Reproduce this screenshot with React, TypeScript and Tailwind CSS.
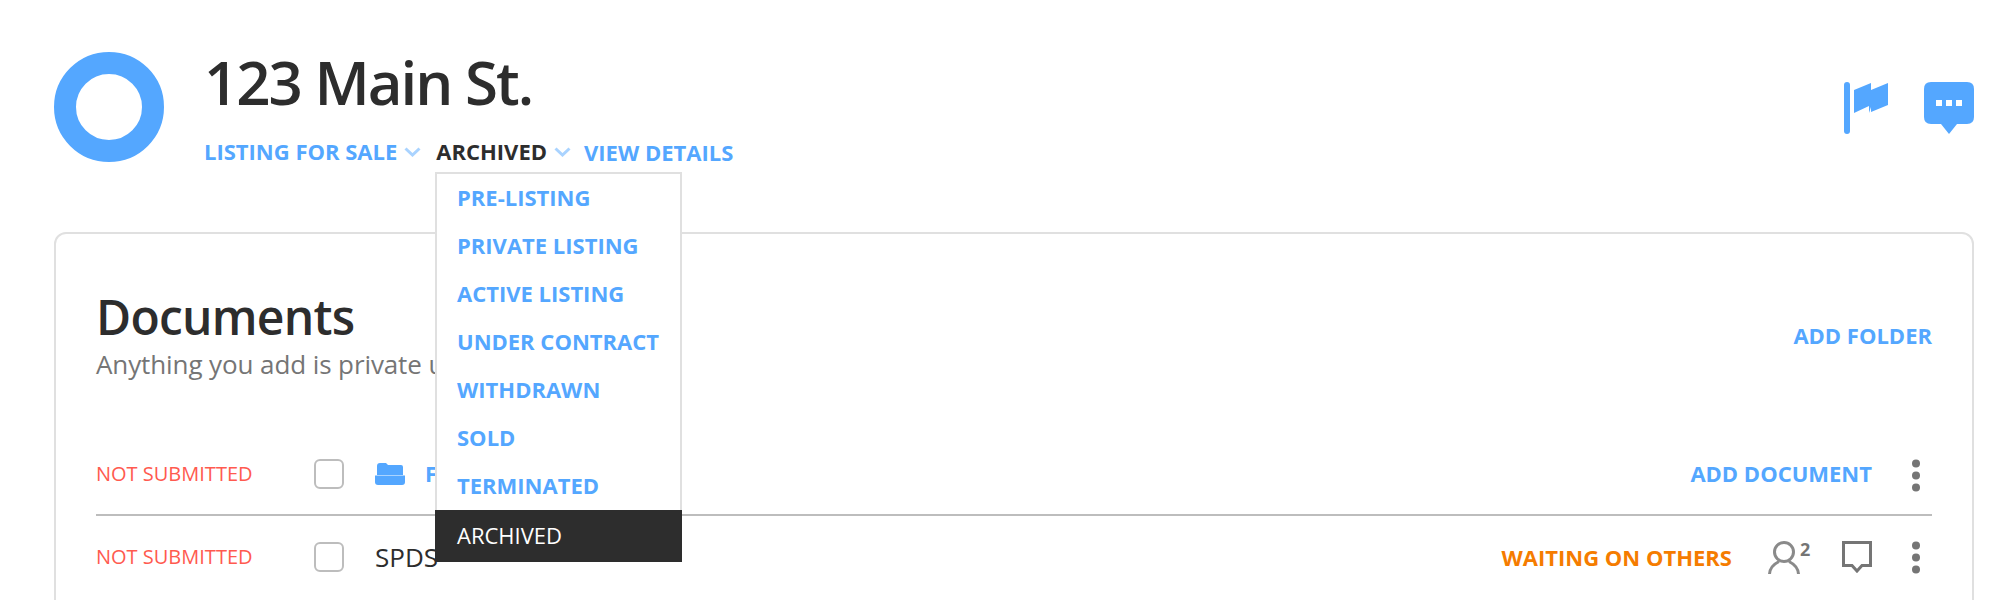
const STATUSES = ["PRE-LISTING", "PRIVATE LISTING", "ACTIVE LISTING", "UNDER CONTRACT", "WITHDRAWN", "SOLD", "TERMINATED"];

function Chevron() {
  return (
    <svg width="17" height="10" viewBox="0 0 17 10" className="ml-[7px] mt-[2px]">
      <path d="M1.5 1.5 L8.5 8 L15.5 1.5" fill="none" stroke="#a9d3ff" strokeWidth="3" />
    </svg>
  );
}

function Kebab() {
  return (
    <svg width="10" height="33" viewBox="0 0 10 33">
      <circle cx="5" cy="4.5" r="4" fill="#757575" />
      <circle cx="5" cy="16.5" r="4" fill="#757575" />
      <circle cx="5" cy="28.5" r="4" fill="#757575" />
    </svg>
  );
}

function Checkbox() {
  return <div className="h-[30px] w-[30px] rounded-[6px] border-2 border-[#bdbdbd] bg-white" />;
}

export default function App() {
  return (
    <div className="relative h-[600px] overflow-hidden bg-white pl-[54px] pr-[26px] pt-[52px] font-['Open_Sans',sans-serif] text-[#2d2d2d]">
      <header className="flex h-[180px] items-start">
        <div className="h-[110px] w-[110px] rounded-full border-[22px] border-[#54a7ff]" />
        <div className="ml-[40px]">
          <h1 className="-mt-[11px] text-[60px] font-semibold leading-[82px] tracking-[-2px]">123 Main St.</h1>
          <nav className="relative mt-[13px] flex items-center text-[22px] font-bold leading-[28px]">
            <span className="text-[#54a7ff]">LISTING FOR SALE</span>
            <Chevron />
            <span className="ml-[15px]">ARCHIVED</span>
            <Chevron />
            <span className="ml-[13px] mt-[2px] text-[#54a7ff]">VIEW DETAILS</span>
            <ul className="absolute left-[231px] top-[36px] z-10 w-[247px] border-2 border-[#e0e0e0] bg-white text-[#54a7ff]">
              {STATUSES.map((s) => (
                <li key={s} className="flex h-[48px] items-center px-[20px] pb-[2px] font-bold">{s}</li>
              ))}
              <li className="-mx-[2px] -mb-[2px] flex h-[52px] items-center bg-[#2d2d2d] px-[22px] pb-[2px] font-normal text-white">ARCHIVED</li>
            </ul>
          </nav>
        </div>
        <div className="ml-auto flex items-start gap-[36px] pt-[30px]">
          <svg width="44" height="52" viewBox="0 0 44 52">
            <rect x="0" y="0" width="6" height="52" rx="3" fill="#54a7ff" />
            <path d="M10 8 L27 1 V8 L44 1 V23 L27 30 V25 L25 31 V24 L10 31 Z" fill="#54a7ff" />
          </svg>
          <svg width="50" height="52" viewBox="0 0 50 52">
            <path d="M7 0 H43 Q50 0 50 7 V35 Q50 42 43 42 H33 L25 52 L17 42 H7 Q0 42 0 35 V7 Q0 0 7 0 Z" fill="#54a7ff" />
            <rect x="12" y="18" width="6" height="6" fill="#fff" />
            <rect x="22" y="18" width="6" height="6" fill="#fff" />
            <rect x="32" y="18" width="6" height="6" fill="#fff" />
          </svg>
        </div>
      </header>

      <section className="h-[500px] rounded-[12px] border-2 border-[#e0e0e0] px-[40px] pt-[52px]">
        <div className="flex items-start justify-between">
          <div>
            <h2 className="text-[48px] font-semibold leading-[62px] tracking-[-0.75px]">Documents</h2>
            <p className="text-[26px] leading-[32px] tracking-[-0.1px] text-[#757575]">Anything you add is private until you share it</p>
          </div>
          <button className="mt-[35px] text-[22px] font-bold leading-[28px] text-[#54a7ff]">ADD FOLDER</button>
        </div>

        <div className="mt-[53px] flex h-[83px] items-center border-b-2 border-[#bdbdbd]">
          <span className="w-[218px] text-[20px] text-[#ff5a4f]">NOT SUBMITTED</span>
          <Checkbox />
          <svg width="30" height="22" viewBox="0 0 30 22" className="ml-[31px]">
            <path d="M2 3 Q2 0 5 0 H11 L13 2 H26 Q28 2 28 4 V12 H2 Z" fill="#54a7ff" />
            <path d="M0 13 H30 V19 Q30 22 27 22 H3 Q0 22 0 19 Z" fill="#54a7ff" />
            <rect x="0" y="12" width="30" height="1" fill="#a9d3ff" />
          </svg>
          <span className="ml-[20px] text-[22px] font-bold text-[#54a7ff]">FOLDER</span>
          <button className="ml-auto pb-[2px] text-[22px] font-bold leading-[28px] text-[#54a7ff]">ADD DOCUMENT</button>
          <div className="ml-[39px] mr-[11px] mt-[4px] flex"><Kebab /></div>
        </div>

        <div className="flex h-[82px] items-center">
          <span className="w-[218px] text-[20px] text-[#ff5a4f]">NOT SUBMITTED</span>
          <Checkbox />
          <span className="ml-[31px] text-[26px]">SPDS</span>
          <span className="ml-auto text-[22px] font-bold text-[#f57c00]">WAITING ON OTHERS</span>
          <div className="relative ml-[36px] h-[33px] w-[44px]">
            <svg width="32" height="33" viewBox="0 0 32 33">
              <circle cx="16" cy="11" r="9.5" fill="none" stroke="#8a8a8a" strokeWidth="3" />
              <path d="M1.5 33 C2 25 8 22 11 20.5 M30.5 33 C30 25 24 22 21 20.5" fill="none" stroke="#8a8a8a" strokeWidth="3" />
            </svg>
            <span className="absolute -top-[3px] left-[32px] text-[18px] font-bold leading-[22px] text-[#757575]">2</span>
          </div>
          <svg width="30" height="32" viewBox="0 0 30 32" className="ml-[30px]">
            <path d="M1.5 1.5 H28.5 V24.5 H20 L15 30 L10 24.5 H1.5 Z" fill="none" stroke="#757575" strokeWidth="3" />
          </svg>
          <div className="ml-[39px] mr-[11px] flex"><Kebab /></div>
        </div>
      </section>
    </div>
  );
}
